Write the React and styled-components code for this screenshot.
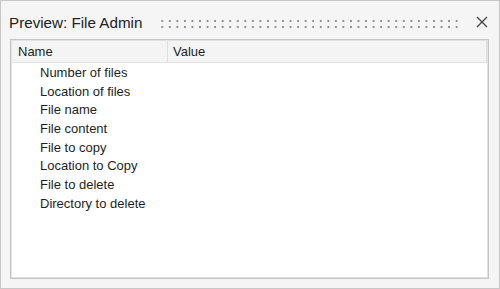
import React from "react";
import styled, { createGlobalStyle } from "styled-components";

const GlobalStyle = createGlobalStyle`
  html, body {
    margin: 0;
    padding: 0;
    background: #f5f5f5;
  }
  * {
    box-sizing: border-box;
  }
`;

const Frame = styled.div`
  width: 500px;
  height: 289px;
  display: flex;
  flex-direction: column;
  background: #f5f5f5;
  border: 1px solid #c8c8c8;
  font-family: "Liberation Sans", Arial, sans-serif;
  color: #1e1e1e;
`;

const TitleBar = styled.div`
  height: 38px;
  display: flex;
  align-items: center;
  padding: 4px 0 0 8px;
`;

const Title = styled.span`
  font-size: 15.2px;
  color: #222;
  white-space: nowrap;
`;

const Grip = styled.div`
  flex: 1;
  height: 10px;
  margin: 1px 12px 0 19px;
  background-image: radial-gradient(circle, #8f8f8f 0.9px, transparent 1.3px);
  background-size: 7.55px 6px;
  background-position: -2.5px 0;
`;

const CloseButton = styled.button`
  width: 14px;
  height: 14px;
  margin-right: 10px;
  padding: 0;
  border: none;
  background: transparent;
  display: flex;
  align-items: center;
  justify-content: center;
`;

const ListView = styled.div`
  flex: 1;
  margin: 0 10px 9px 9px;
  background: #fff;
  border: 1px solid #c4c4c4;
  box-shadow: inset 0 0 0 1px #e2e2e2;
  display: flex;
  flex-direction: column;
`;

const HeaderRow = styled.div`
  height: 22px;
  display: grid;
  grid-template-columns: 156px 1fr;
  background: #f4f4f4;
  border-bottom: 1px solid #e3e3e3;
  margin: 1px 1px 0 1px;
`;

const HeaderCell = styled.div`
  display: flex;
  align-items: center;
  padding-left: ${p => p.$pad}px;
  font-size: 13px;
  color: #1e1e1e;
  border-right: 1px solid #e0e0e0;
`;

const Rows = styled.div`
  padding-top: 0;
`;

const Row = styled.div`
  height: 18.7px;
  display: flex;
  align-items: center;
  padding-left: 29px;
  font-size: 13px;
  color: #1e1e1e;
  white-space: nowrap;
`;

const fields = [
  "Number of files",
  "Location of files",
  "File name",
  "File content",
  "File to copy",
  "Location to Copy",
  "File to delete",
  "Directory to delete",
];

export default function App() {
  return (
    <>
      <GlobalStyle />
      <Frame>
        <TitleBar>
          <Title>Preview: File Admin</Title>
          <Grip />
          <CloseButton aria-label="Close">
            <svg width="12" height="12" viewBox="0 0 12 12">
              <path d="M1 1 L11 11 M11 1 L1 11" stroke="#444" strokeWidth="1.3" fill="none" />
            </svg>
          </CloseButton>
        </TitleBar>
        <ListView>
          <HeaderRow>
            <HeaderCell $pad={6}>Name</HeaderCell>
            <HeaderCell $pad={5}>Value</HeaderCell>
          </HeaderRow>
          <Rows>
            {fields.map(f => (
              <Row key={f}>{f}</Row>
            ))}
          </Rows>
        </ListView>
      </Frame>
    </>
  );
}
